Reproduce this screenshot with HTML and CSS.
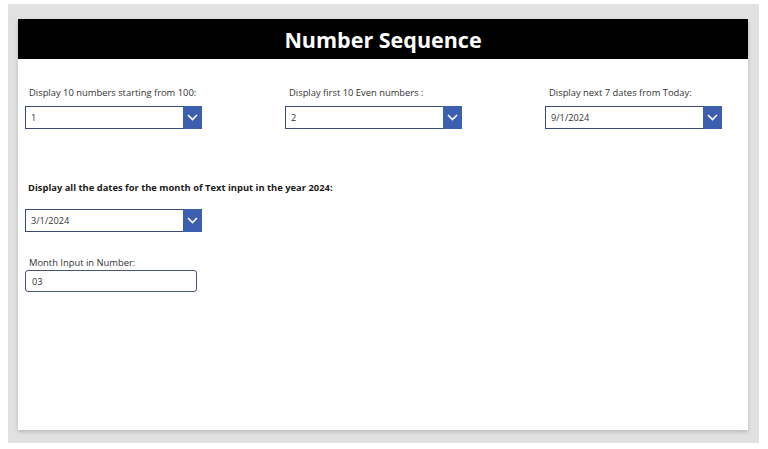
FILE: index.html
```html
<!DOCTYPE html>
<html>
<head>
<meta charset="utf-8">
<link rel="stylesheet" href="styles.css">
</head>
<body>
<div class="frame">
  <div class="card">
    <div class="header">Number Sequence</div>
    <div class="content">
      <div class="row">
        <div class="field">
          <div class="label">Display 10 numbers starting from 100:</div>
          <div class="dropdown"><span class="value">1</span><span class="arrow"><svg width="11" height="7" viewBox="0 0 11 7"><path d="M1 1 L5.5 5.5 L10 1" fill="none" stroke="#fff" stroke-width="1.6"/></svg></span></div>
        </div>
        <div class="field">
          <div class="label">Display first 10 Even numbers :</div>
          <div class="dropdown"><span class="value">2</span><span class="arrow"><svg width="11" height="7" viewBox="0 0 11 7"><path d="M1 1 L5.5 5.5 L10 1" fill="none" stroke="#fff" stroke-width="1.6"/></svg></span></div>
        </div>
        <div class="field">
          <div class="label">Display next 7 dates from Today:</div>
          <div class="dropdown"><span class="value">9/1/2024</span><span class="arrow"><svg width="11" height="7" viewBox="0 0 11 7"><path d="M1 1 L5.5 5.5 L10 1" fill="none" stroke="#fff" stroke-width="1.6"/></svg></span></div>
        </div>
      </div>
      <div class="section">
        <div class="label bold">Display all the dates for the month of Text input in the year 2024:</div>
        <div class="dropdown"><span class="value">3/1/2024</span><span class="arrow"><svg width="11" height="7" viewBox="0 0 11 7"><path d="M1 1 L5.5 5.5 L10 1" fill="none" stroke="#fff" stroke-width="1.6"/></svg></span></div>
        <div class="label month">Month Input in Number:</div>
        <div class="textinput">03</div>
      </div>
    </div>
  </div>
</div>
</body>
</html>
```
FILE: styles.css
```css
html, body {
  margin: 0;
  padding: 0;
  background: #ffffff;
  font-family: "Open Sans", "Noto Sans", sans-serif;
}
.frame {
  margin: 4px 9px 0 8px;
  height: 439px;
  box-sizing: border-box;
  background: #e1e1e1;
  padding: 15px 11px 13px 10px;
}
.card {
  height: 411px;
  background: #ffffff;
  box-shadow: 0 2px 4px rgba(0,0,0,0.18);
  display: flex;
  flex-direction: column;
}
.header {
  height: 40px;
  background: #000000;
  color: #ffffff;
  font-weight: 700;
  font-size: 21.5px;
  display: flex;
  align-items: center;
  justify-content: center;
}
.content {
  padding: 27px 0 0 7px;
}
.row {
  display: grid;
  grid-template-columns: 260px 260px auto;
}
.label {
  font-size: 9.4px;
  line-height: 14px;
  color: #333333;
  padding-left: 4px;
  margin-bottom: 6px;
  white-space: nowrap;
}
.label.bold {
  font-weight: 700;
  color: #1a1a1a;
  padding-left: 3px;
  margin-bottom: 14px;
}
.section {
  padding-top: 52px;
}
.dropdown {
  width: 177px;
  height: 23px;
  box-sizing: border-box;
  border: 1px solid #3a4a7a;
  display: flex;
  align-items: center;
  justify-content: space-between;
}
.value {
  font-size: 9.2px;
  color: #333333;
  padding-left: 5px;
}
.arrow {
  width: 19px;
  height: 23px;
  margin-right: -1px;
  background: #3d5fb0;
  display: flex;
  align-items: center;
  justify-content: center;
}
.label.month {
  margin-top: 24px;
  margin-bottom: 0;
}
.textinput {
  width: 172px;
  height: 22px;
  box-sizing: border-box;
  border: 1.5px solid #4a5478;
  border-radius: 3px;
  font-size: 9.2px;
  color: #333333;
  padding-left: 6px;
  display: flex;
  align-items: center;
}
```
